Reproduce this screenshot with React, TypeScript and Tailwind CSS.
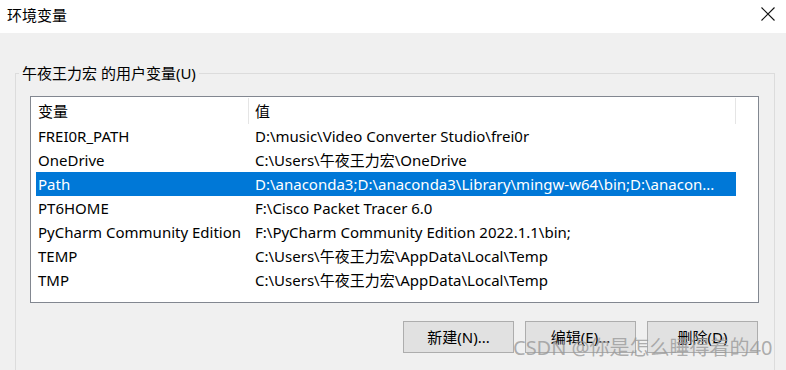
import React from "react";

const FONT = { fontFamily: '"Noto Sans", "Noto Sans CJK SC", sans-serif' };

const ROWS: [string, string][] = [
  ["FREI0R_PATH", "D:\\music\\Video Converter Studio\\frei0r"],
  ["OneDrive", "C:\\Users\\午夜王力宏\\OneDrive"],
  ["Path", "D:\\anaconda3;D:\\anaconda3\\Library\\mingw-w64\\bin;D:\\anacon..."],
  ["PT6HOME", "F:\\Cisco Packet Tracer 6.0"],
  ["PyCharm Community Edition", "F:\\PyCharm Community Edition 2022.1.1\\bin;"],
  ["TEMP", "C:\\Users\\午夜王力宏\\AppData\\Local\\Temp"],
  ["TMP", "C:\\Users\\午夜王力宏\\AppData\\Local\\Temp"],
];

export default function App() {
  return (
    <div className="relative h-[370px] w-[786px] overflow-hidden bg-[#f0f0f0] text-[15px] text-black" style={FONT}>
      {/* title bar */}
      <div className="flex h-[33px] items-center justify-between bg-white pl-[7px] pr-[11px]">
        <span className="-mt-[3px] leading-none">环境变量</span>
        <svg width="14" height="14" viewBox="0 0 14 14" className="-mt-[6px]">
          <path d="M0.5 0.5 L13.5 13.5 M13.5 0.5 L0.5 13.5" stroke="#111" strokeWidth="1.1" fill="none" />
        </svg>
      </div>

      <fieldset className="ml-[15px] mt-[30px] h-[400px] w-[760px] border border-[#dcdcdc] px-[14px]">
        <legend className="-ml-[11px] px-[3px] leading-[20px]">午夜王力宏 的用户变量(U)</legend>

        <div className="mt-[13px] h-[207px] w-[729px] border border-[#828790] bg-white pl-[5px] pt-[1px]">
          <div className="grid h-[26px] grid-cols-[213px_487px] items-center">
            <div className="flex h-full items-center border-r border-[#e5e5e5] pl-[2px]">变量</div>
            <div className="flex h-full items-center border-r border-[#e5e5e5] pl-[6px]">值</div>
          </div>
          {ROWS.map(([name, value]) => {
            const sel = name === "Path";
            return (
              <div
                key={name}
                className={`grid h-[24px] w-[700px] grid-cols-[213px_487px] items-center whitespace-nowrap ${
                  sel ? "bg-[#0078d7] text-white" : ""
                }`}
              >
                <div className="overflow-hidden pl-[2px]">{name}</div>
                <div className="overflow-hidden pl-[6px]">{value}</div>
              </div>
            );
          })}
        </div>

        <div className="mt-[18px] flex w-[728px] justify-end gap-[11px]">
          <button className="h-[32px] w-[111px] border border-[#adadad] bg-[#e1e1e1]">新建(N)...</button>
          <button className="h-[32px] w-[111px] border border-[#adadad] bg-[#e1e1e1]">编辑(E)...</button>
          <button className="h-[32px] w-[111px] border border-[#adadad] bg-[#e1e1e1]">删除(D)</button>
        </div>
      </fieldset>

      {/* watermark */}
      <div className="pointer-events-none absolute left-[513px] top-[335px] text-[20px] leading-[26px] text-[#9a9a9a]/80">
        CSDN @你是怎么睡得着的40
      </div>
    </div>
  );
}
